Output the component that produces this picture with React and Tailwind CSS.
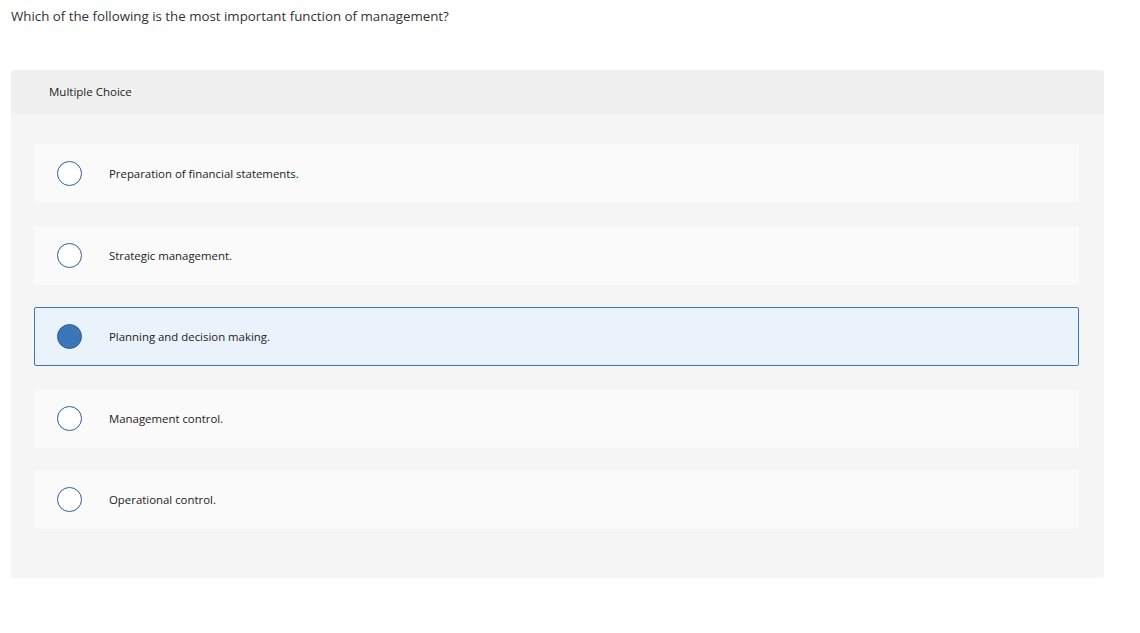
const options = [
  "Preparation of financial statements.",
  "Strategic management.",
  "Planning and decision making.",
  "Management control.",
  "Operational control.",
];

export default function App() {
  const selected = 2;

  return (
    <div className="min-h-[633px] bg-white pt-[6px] text-[#333]" style={{ fontFamily: "'Open Sans', 'Liberation Sans', sans-serif" }}>
      <p className="pl-[11px] text-[13.3px] leading-[20px] text-[#333]">
        Which of the following is the most important function of management?
      </p>

      <div className="ml-[11px] mt-[44px] w-[1093px] overflow-hidden rounded-[3px] bg-[#f5f5f5]">
        <div className="flex h-[44px] items-center bg-[#f0f0f0] pl-[38px] text-[11.5px] text-[#222]">
          Multiple Choice
        </div>

        <div className="flex flex-col gap-[22.5px] pl-[23px] pr-[25px] pb-[49px] pt-[30px]">
          {options.map((text, i) => {
            const active = i === selected;
            return (
              <div
                key={text}
                className={
                  active
                    ? "flex h-[59px] items-center rounded-[2px] border border-[#3b78c0] bg-[#eaf2fb] pl-[22px]"
                    : "flex h-[59px] items-center rounded-[3px] border border-transparent bg-[#fafafa] pl-[22px]"
                }
              >
                {active ? (
                  <span className="h-[25px] w-[25px] shrink-0 rounded-full border border-[#2f5f95] bg-[#3b76b9]" />
                ) : (
                  <span className="h-[25px] w-[25px] shrink-0 rounded-full border-[1.5px] border-[#2f5f95] bg-white" />
                )}
                <span className="ml-[27px] pt-[1px] text-[11.4px] text-[#222]">{text}</span>
              </div>
            );
          })}
        </div>
      </div>
    </div>
  );
}
